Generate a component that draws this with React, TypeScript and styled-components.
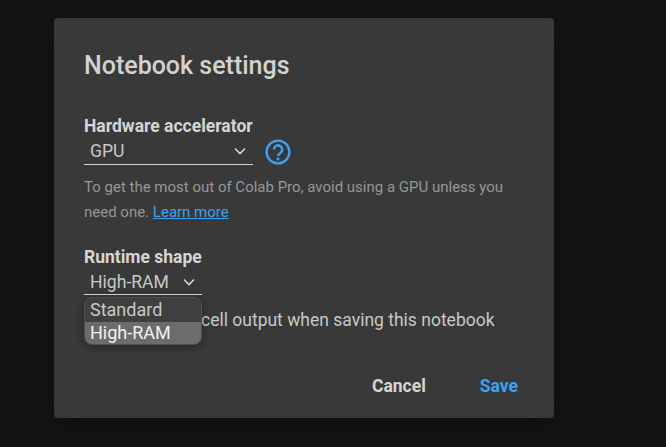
import React from "react";
import styled, { createGlobalStyle } from "styled-components";

const Global = createGlobalStyle`
  html, body { margin: 0; height: 100%; background: #141414; overflow: hidden; }
  #root { height: 100%; }
`;

const Page = styled.div`
  width: 666px;
  height: 447px;
  padding: 18px 0 0 54px;
  box-sizing: border-box;
  font-family: Roboto, "Liberation Sans", sans-serif;
`;

const Dialog = styled.div`
  width: 500px;
  height: 400px;
  box-sizing: border-box;
  padding: 33px 36px 0 30px;
  background: #393939;
  border-radius: 4px;
  box-shadow: 0 6px 30px rgba(0, 0, 0, 0.3);
  color: #d5d5d5;
  display: flex;
  flex-direction: column;
`;

const Title = styled.h2`
  margin: 0 0 35px;
  font-size: 25px;
  line-height: 30px;
  font-weight: 500;
  color: #d2d2d2;
`;

const Label = styled.div`
  font-size: 17.5px;
  line-height: 20px;
  font-weight: 700;
  color: #d5d5d5;
`;

const SelectRow = styled.div`
  display: flex;
  align-items: flex-end;
  gap: 12px;
`;

const Select = styled.div<{ $width: number; $height: number; $top: number }>`
  position: relative;
  width: ${(p) => p.$width}px;
  height: ${(p) => p.$height}px;
  box-sizing: border-box;
  padding: ${(p) => p.$top}px 6px 0;
  border-bottom: 1px solid #d5d5d5;
  display: flex;
  align-items: center;
  justify-content: space-between;
  font-size: 17.6px;
  color: #c8c8c8;
`;

const Chevron = styled.svg`
  width: 14px;
  height: 14px;
  fill: none;
  stroke: #d5d5d5;
  stroke-width: 1.6;
`;

const Help = styled.svg`
  width: 26px;
  height: 26px;
`;

const Hint = styled.p`
  margin: 10px 0 0;
  width: 430px;
  font-size: 15px;
  line-height: 25px;
  color: #969696;
`;

const Link = styled.a`
  color: #3fa0ef;
  text-decoration: underline;
`;

const Section = styled.div`
  margin-top: 22px;
`;

const Popup = styled.div`
  position: absolute;
  left: 0;
  top: 30px;
  width: 118px;
  height: 48px;
  box-sizing: border-box;
  padding-top: 1px;
  border-radius: 8px;
  background: #3f3f3f;
  border: 1px solid #505050;
  overflow: hidden;
  box-shadow: 0 2px 8px rgba(0, 0, 0, 0.35);
  font-size: 18px;
  line-height: 22px;
`;

const Option = styled.div<{ $active?: boolean }>`
  height: 23px;
  padding: 0 5px;
  background: ${(p) => (p.$active ? "#6c6c6c" : "transparent")};
  color: ${(p) => (p.$active ? "#f2f2f2" : "#c8c8c8")};
`;

const CheckRow = styled.div`
  margin: 14px 0 0 117px;
  font-size: 17.5px;
  line-height: 22px;
  color: #c8c8c8;
  white-space: nowrap;
`;

const Actions = styled.div`
  margin-top: auto;
  height: 44px;
  display: flex;
  justify-content: flex-end;
  gap: 54px;
`;

const Action = styled.button<{ $primary?: boolean }>`
  height: 24px;
  padding: 0;
  border: 0;
  background: none;
  font: 700 17.5px Roboto, "Liberation Sans", sans-serif;
  color: ${(p) => (p.$primary ? "#3fa0ef" : "#d5d5d5")};
`;

const ChevronIcon = () => (
  <Chevron viewBox="0 0 14 14">
    <path d="M2 4.5 L7 9.5 L12 4.5" />
  </Chevron>
);

export default function App() {
  return (
    <Page>
      <Global />
      <Dialog>
        <Title>Notebook settings</Title>
        <Label>Hardware accelerator</Label>
        <SelectRow>
          <Select $width={169} $height={29} $top={1}>
            GPU
            <ChevronIcon />
          </Select>
          <Help viewBox="0 0 26 26">
            <circle cx="13" cy="13" r="11.4" fill="none" stroke="#3fa0ef" strokeWidth="2.4" />
            <path d="M8.8 10.6 a4.2 4.2 0 1 1 6.6 3.4 c-1.5 1 -2.4 1.6 -2.4 3.2" fill="none" stroke="#3fa0ef" strokeWidth="2.4" />
            <circle cx="13" cy="20" r="1.5" fill="#3fa0ef" />
          </Help>
        </SelectRow>
        <Hint>
          To get the most out of Colab Pro, avoid using a GPU unless you need one. <Link>Learn more</Link>
        </Hint>
        <Section>
          <Label>Runtime shape</Label>
          <Select $width={118} $height={28} $top={2}>
            High-RAM
            <ChevronIcon />
            <Popup>
              <Option>Standard</Option>
              <Option $active>High-RAM</Option>
            </Popup>
          </Select>
        </Section>
        <CheckRow>cell output when saving this notebook</CheckRow>
        <Actions>
          <Action>Cancel</Action>
          <Action $primary>Save</Action>
        </Actions>
      </Dialog>
    </Page>
  );
}
